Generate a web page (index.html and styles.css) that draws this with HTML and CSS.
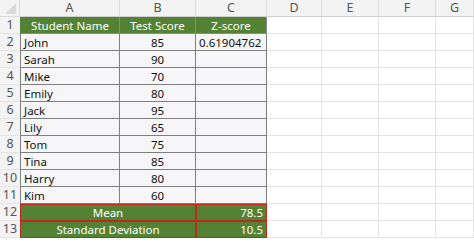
FILE: index.html
```html
<!DOCTYPE html>
<html>
<head>
<meta charset="utf-8">
<link rel="stylesheet" href="styles.css">
</head>
<body>
<div class="sheet">
  <div class="corner"><svg width="20" height="17" viewBox="0 0 20 17"><polygon points="17,3 17,14 5,14" fill="#d9d9d9"/></svg></div>
  <div class="colh">A</div><div class="colh">B</div><div class="colh">C</div><div class="colh">D</div><div class="colh">E</div><div class="colh">F</div><div class="colh">G</div>

  <div class="rowh">1</div><div class="hd ca">Student Name</div><div class="hd">Test Score</div><div class="hd">Z-score</div><div class="c"></div><div class="c"></div><div class="c"></div><div class="c"></div>

  <div class="rowh">2</div><div class="t ca">John</div><div class="t mid">85</div><div class="t">0.61904762</div><div class="c"></div><div class="c"></div><div class="c"></div><div class="c"></div>
  <div class="rowh">3</div><div class="t ca">Sarah</div><div class="t mid">90</div><div class="t"></div><div class="c"></div><div class="c"></div><div class="c"></div><div class="c"></div>
  <div class="rowh">4</div><div class="t ca">Mike</div><div class="t mid">70</div><div class="t"></div><div class="c"></div><div class="c"></div><div class="c"></div><div class="c"></div>
  <div class="rowh">5</div><div class="t ca">Emily</div><div class="t mid">80</div><div class="t"></div><div class="c"></div><div class="c"></div><div class="c"></div><div class="c"></div>
  <div class="rowh">6</div><div class="t ca">Jack</div><div class="t mid">95</div><div class="t"></div><div class="c"></div><div class="c"></div><div class="c"></div><div class="c"></div>
  <div class="rowh">7</div><div class="t ca">Lily</div><div class="t mid">65</div><div class="t"></div><div class="c"></div><div class="c"></div><div class="c"></div><div class="c"></div>
  <div class="rowh">8</div><div class="t ca">Tom</div><div class="t mid">75</div><div class="t"></div><div class="c"></div><div class="c"></div><div class="c"></div><div class="c"></div>
  <div class="rowh">9</div><div class="t ca">Tina</div><div class="t mid">85</div><div class="t"></div><div class="c"></div><div class="c"></div><div class="c"></div><div class="c"></div>
  <div class="rowh">10</div><div class="t ca">Harry</div><div class="t mid">80</div><div class="t"></div><div class="c"></div><div class="c"></div><div class="c"></div><div class="c"></div>
  <div class="rowh">11</div><div class="t ca">Kim</div><div class="t mid">60</div><div class="t"></div><div class="c"></div><div class="c"></div><div class="c"></div><div class="c"></div>

  <div class="rowh">12</div><div class="st merged">Mean</div><div class="st num">78.5</div><div class="c"></div><div class="c"></div><div class="c"></div><div class="c"></div>
  <div class="rowh">13</div><div class="st merged">Standard Deviation</div><div class="st num">10.5</div><div class="c"></div><div class="c"></div><div class="c"></div><div class="c"></div>
</div>
</body>
</html>
```
FILE: styles.css
```css
html, body {
  margin: 0;
  padding: 0;
  background: #ffffff;
}
.sheet {
  display: grid;
  grid-template-columns: 20px 100px 76px 71px 55px 57px 57px 38px;
  grid-auto-rows: 17px;
  width: 474px;
  font-family: "Noto Sans", "Open Sans", sans-serif;
  font-size: 11.5px;
  color: #111;
}
.sheet > div {
  box-sizing: border-box;
  display: flex;
  align-items: center;
  white-space: nowrap;
  overflow: hidden;
  line-height: 1;
  padding-top: 1px;
}
.corner {
  background: #f3f3f3;
  border-right: 1px solid #dcdcdc;
  border-bottom: 1px solid #dcdcdc;
}
.corner svg { display: block; }
.colh {
  background: #f3f3f3;
  border-right: 1px solid #dcdcdc;
  border-bottom: 1px solid #d0d0d0;
  justify-content: center;
  color: #555;
  font-size: 12.5px;
}
.rowh {
  background: #f3f3f3;
  border-bottom: 1px solid #e4e4e4;
  justify-content: center;
  color: #555;
  font-size: 12.5px;
}
.c {
  border-right: 1px solid #e4e4e4;
  border-bottom: 1px solid #e4e4e4;
}
.hd {
  background: #548235;
  color: #ffffff;
  justify-content: center;
  border-right: 1px solid #8a8a8a;
  border-bottom: 1px solid #8a8a8a;
}
.t {
  background: #f6f6f8;
  border-right: 1px solid #7f7f7f;
  border-bottom: 1px solid #7f7f7f;
  padding-left: 3px;
}
.ca {
  border-left: 1px solid #7f7f7f;
}
.hd.ca {
  border-left: 1px solid #548235;
}
.t.mid {
  justify-content: center;
  padding-left: 0;
}
.st {
  background: #548235;
  color: #ffffff;
  border: 1px solid #c0281f;
}
.merged {
  grid-column: span 2;
  justify-content: center;
}
.num {
  justify-content: flex-end;
  padding-right: 3px;
}
```
